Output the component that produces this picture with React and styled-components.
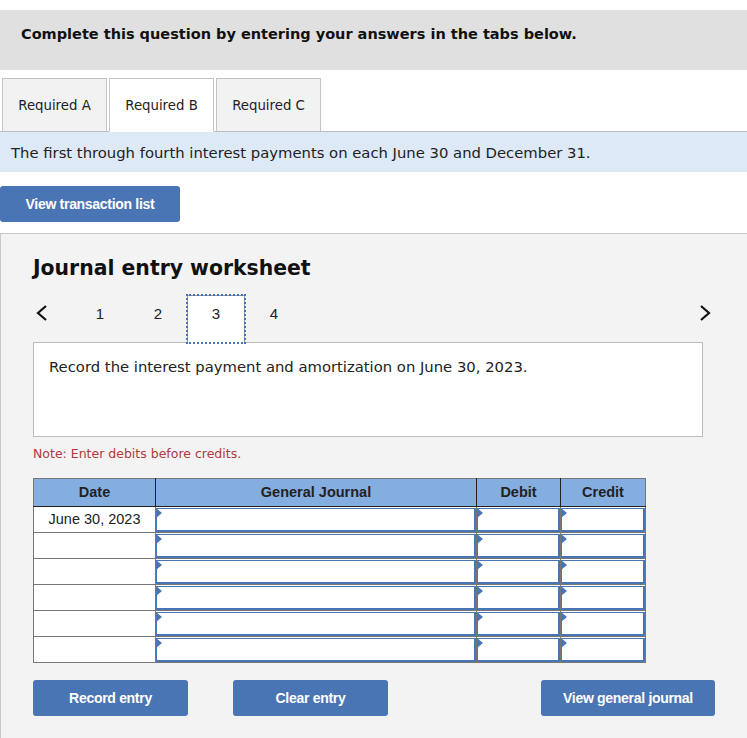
import React from "react";
import styled, { createGlobalStyle } from "styled-components";

const GlobalStyle = createGlobalStyle`
  html, body {
    margin: 0;
    padding: 0;
    background: #ffffff;
  }
  body {
    font-family: "DejaVu Sans", Verdana, sans-serif;
    color: #222;
  }
`;

const rows = ["June 30, 2023", "", "", "", "", ""];

const App = () => {
  return (
    <Page>
      <GlobalStyle />
      <Banner>Complete this question by entering your answers in the tabs below.</Banner>

      <TabBar>
        <Tab>Required A</Tab>
        <Tab active>Required B</Tab>
        <Tab>Required C</Tab>
      </TabBar>

      <InfoBand>
        The first through fourth interest payments on each June 30 and December 31.
      </InfoBand>

      <ListRow>
        <BlueButton width="180px">View transaction list</BlueButton>
      </ListRow>

      <Worksheet>
        <Title>Journal entry worksheet</Title>

        <Nav>
          <Arrow>
            <svg width="14" height="18" viewBox="0 0 14 18">
              <path d="M11 2 L3 9 L11 16" fill="none" stroke="#111" strokeWidth="2.2" />
            </svg>
          </Arrow>
          <Steps>
            <Step>1</Step>
            <Step>2</Step>
            <Step active>3</Step>
            <Step>4</Step>
          </Steps>
          <Arrow>
            <svg width="14" height="18" viewBox="0 0 14 18">
              <path d="M3 2 L11 9 L3 16" fill="none" stroke="#111" strokeWidth="2.2" />
            </svg>
          </Arrow>
        </Nav>

        <Description>Record the interest payment and amortization on June 30, 2023.</Description>

        <Note>Note: Enter debits before credits.</Note>

        <Table>
          <thead>
            <tr>
              <Th width="122px">Date</Th>
              <Th width="321px">General Journal</Th>
              <Th width="84px">Debit</Th>
              <Th width="85px">Credit</Th>
            </tr>
          </thead>
          <tbody>
            {rows.map((d, i) => (
              <tr key={i}>
                <DateCell>{d}</DateCell>
                <InputCell>
                  <InputBox />
                </InputCell>
                <InputCell>
                  <InputBox />
                </InputCell>
                <InputCell>
                  <InputBox />
                </InputCell>
              </tr>
            ))}
          </tbody>
        </Table>

        <Actions>
          <ActionGroup>
            <BlueButton width="155px">Record entry</BlueButton>
            <BlueButton width="155px">Clear entry</BlueButton>
          </ActionGroup>
          <BlueButton width="174px">View general journal</BlueButton>
        </Actions>
      </Worksheet>
    </Page>
  );
};

export default App;

const Page = styled.div`
  width: 747px;
  height: 738px;
  overflow: hidden;
  padding-top: 10px;
  box-sizing: border-box;
`;

const Banner = styled.div`
  height: 60px;
  box-sizing: border-box;
  background: #e0e0e0;
  padding: 15px 0 0 21px;
  font-size: 14.5px;
  line-height: 18px;
  font-weight: bold;
  color: #111;
`;

const TabBar = styled.div`
  display: flex;
  gap: 2px;
  margin-top: 8px;
  padding-left: 2px;
  border-bottom: 1px solid #bdbdbd;
  height: 53px;
`;

const Tab = styled.div`
  width: 105px;
  box-sizing: border-box;
  display: flex;
  align-items: center;
  justify-content: center;
  font-size: 13.3px;
  color: #222;
  background: ${(p) => (p.active ? "#ffffff" : "#f2f2f2")};
  border: 1px solid #c4c4c4;
  border-bottom: ${(p) => (p.active ? "1px solid #ffffff" : "none")};
  margin-bottom: ${(p) => (p.active ? "-1px" : "0")};
  height: ${(p) => (p.active ? "54px" : "53px")};
`;

const InfoBand = styled.div`
  height: 40px;
  background: #dde9f7;
  display: flex;
  align-items: center;
  padding-left: 11px;
  font-size: 14.8px;
  color: #222;
`;

const ListRow = styled.div`
  padding-top: 14px;
  height: 36px;
`;

const BlueButton = styled.div`
  width: ${(p) => p.width};
  height: 36px;
  box-sizing: border-box;
  background: #4a75b4;
  border-radius: 3px;
  color: #fff;
  font-family: "Liberation Sans", Arial, sans-serif;
  font-weight: bold;
  font-size: 14px;
  letter-spacing: -0.3px;
  display: flex;
  align-items: center;
  justify-content: center;
`;

const Worksheet = styled.div`
  margin-top: 11px;
  background: #f3f3f3;
  border: 1px solid #c8c8c8;
  border-right: none;
  padding: 0 44px 40px 32px;
  min-height: 560px;
`;

const Title = styled.h2`
  margin: 22px 0 0 0;
  font-size: 20.4px;
  font-weight: bold;
  color: #111;
  line-height: 24px;
`;

const Nav = styled.div`
  display: flex;
  align-items: flex-start;
  justify-content: space-between;
  margin-top: 15px;
  height: 48px;
`;

const Arrow = styled.div`
  width: 14px;
  height: 36px;
  display: flex;
  align-items: center;
  padding-left: 2px;
  &:last-child {
    margin-right: -9px;
  }
`;

const Steps = styled.div`
  display: flex;
  align-items: flex-start;
  margin-left: 22px;
  margin-right: auto;
`;

const Step = styled.div`
  width: 58px;
  height: 48px;
  box-sizing: border-box;
  display: flex;
  justify-content: center;
  padding-top: 9px;
  font-family: "Liberation Sans", Arial, sans-serif;
  font-size: 15px;
  line-height: 18px;
  color: #222;
  background: ${(p) => (p.active ? "#ffffff" : "transparent")};
  border: ${(p) => (p.active ? "1px solid #999" : "1px solid transparent")};
  border-bottom: none;
  outline: ${(p) => (p.active ? "2px dotted #4a75b4" : "none")};
  outline-offset: -1px;
  position: relative;
  z-index: 1;
`;

const Description = styled.div`
  background: #fff;
  border: 1px solid #bdbdbd;
  height: 95px;
  box-sizing: border-box;
  padding: 15px 15px;
  font-size: 14.8px;
  color: #222;
  margin-top: -1px;
`;

const Note = styled.div`
  margin-top: 10px;
  font-size: 12.5px;
  color: #b03a3a;
  line-height: 14px;
`;

const Table = styled.table`
  margin-top: 17px;
  border-collapse: collapse;
  font-family: "Liberation Sans", Arial, sans-serif;
  font-size: 14.5px;
  border: 1px solid #777;
`;

const Th = styled.th`
  width: ${(p) => p.width};
  box-sizing: border-box;
  height: 28px;
  background: #84aee0;
  color: #222;
  font-weight: bold;
  font-size: 14.5px;
  border: 1px solid #222;
  border-top-color: #777;
  padding: 0 0 2px 0;
  &:first-child {
    border-left-color: #777;
  }
  &:last-child {
    border-right-color: #777;
  }
`;

const DateCell = styled.td`
  height: 26px;
  box-sizing: border-box;
  background: #fff;
  border: 1px solid #777;
  text-align: center;
  color: #222;
  padding: 0 0 2px 0;
`;

const InputCell = styled.td`
  height: 26px;
  box-sizing: border-box;
  border: 1px solid #777;
  padding: 0;
  background: #fff;
`;

const InputBox = styled.div`
  position: relative;
  height: 24px;
  box-sizing: border-box;
  border: 2px solid #4a75b4;
  border-top-width: 1px;
  border-left-width: 1px;
  background: #fff;
  &::before {
    content: "";
    position: absolute;
    left: -1px;
    top: -1px;
    border-top: 5px solid transparent;
    border-bottom: 5px solid transparent;
    border-left: 6px solid #4a75b4;
  }
`;

const Actions = styled.div`
  display: flex;
  justify-content: space-between;
  margin-top: 17px;
  width: 682px;
`;

const ActionGroup = styled.div`
  display: flex;
  gap: 45px;
`;
